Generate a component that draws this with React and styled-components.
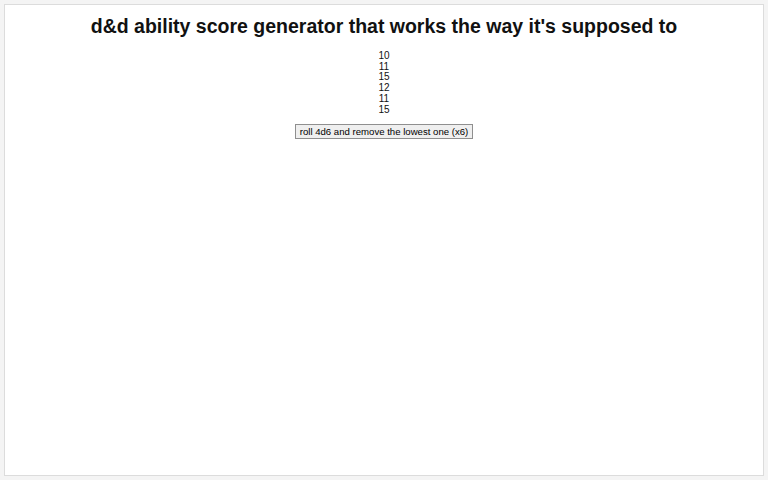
import { useState } from "react";
import styled, { createGlobalStyle } from "styled-components";

const GlobalStyle = createGlobalStyle`
  html, body {
    margin: 0;
    padding: 0;
    background: #f4f4f4;
    font-family: "Liberation Sans", Arial, sans-serif;
  }
`;

const Page = styled.div`
  padding: 4px;
  height: 480px;
  box-sizing: border-box;
`;

const Card = styled.div`
  background: #fff;
  border: 1px solid #dcdcdc;
  height: 100%;
  box-sizing: border-box;
  display: flex;
  flex-direction: column;
  align-items: center;
`;

const Title = styled.h1`
  margin: 10px 0 13px;
  font-size: 19.5px;
  font-weight: bold;
  color: #111;
`;

const Scores = styled.div`
  display: flex;
  flex-direction: column;
  align-items: center;
  font-size: 10px;
  line-height: 10.7px;
  color: #111;
`;

const RollButton = styled.button`
  margin-top: 9px;
  font-family: "Liberation Sans", Arial, sans-serif;
  font-size: 9.6px;
  line-height: 11px;
  padding: 1px 4px;
  background: #efefef;
  border: 1px solid #8f8f8f;
  color: #000;
  cursor: pointer;
`;

const roll = () => {
  const dice = Array.from({ length: 4 }, () => 1 + Math.floor(Math.random() * 6));
  dice.sort((a, b) => a - b);
  return dice.slice(1).reduce((a, b) => a + b, 0);
};

const App = () => {
  const [scores, setScores] = useState([10, 11, 15, 12, 11, 15]);

  return (
    <Page>
      <GlobalStyle />
      <Card>
        <Title>d&amp;d ability score generator that works the way it's supposed to</Title>
        <Scores>
          {scores.map((s, i) => (
            <span key={i}>{s}</span>
          ))}
        </Scores>
        <RollButton onClick={() => setScores(Array.from({ length: 6 }, roll))}>
          roll 4d6 and remove the lowest one (x6)
        </RollButton>
      </Card>
    </Page>
  );
};

export default App;
